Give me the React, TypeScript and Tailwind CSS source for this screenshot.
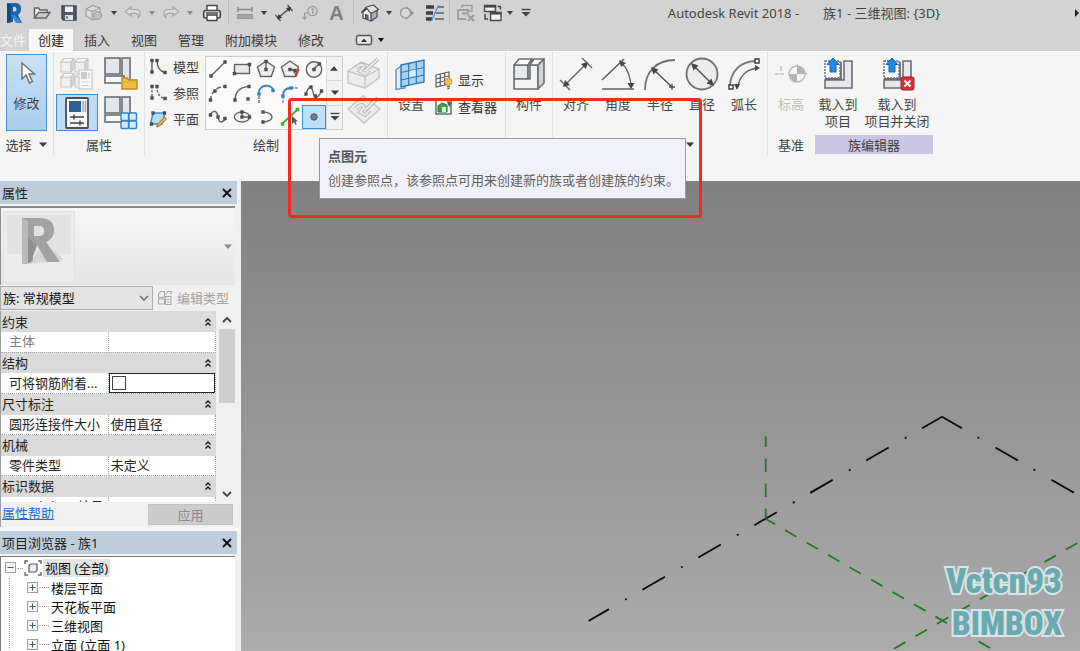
import { useState } from "react";
import type { ReactNode } from "react";

function Svg({ w, h, children }: { w: number; h: number; children: ReactNode }) {
  return (
    <svg width={w} height={h} viewBox={`0 0 ${w} ${h}`} fill="none" stroke="#5f6266" strokeWidth="1.4" className="shrink-0" aria-hidden="true">
      {children}
    </svg>
  );
}

function Node({ x, y, c = "#4b4e52" }: { x: number; y: number; c?: string }) {
  return <rect x={x - 1.7} y={y - 1.7} width="3.4" height="3.4" rx="0.4" fill={c} stroke="none" />;
}

function Caret({ c = "#3c3c3c" }: { c?: string }) {
  return (
    <Svg w={8} h={6}>
      <path d="M1 1h6L4 5z" fill={c} stroke="none" />
    </Svg>
  );
}

function WideCaret({ c = "#3c3c3c" }: { c?: string }) {
  return (
    <Svg w={10} h={6}>
      <path d="M1 0.500h8L5 5z" fill={c} stroke="none" />
    </Svg>
  );
}

/* ---------- quick access bar ---------- */

const LogoR = () => (
  <Svg w={20} h={22}>
    <path d="M3 1h8c4 0 6 2 6 6 0 3-1 4-3 6l4 8h-6l-3-7v6l-6 1z" fill="#1c62ad" stroke="none" />
    <path d="M3 1l4 2v17l-4 1z" fill="#134a86" stroke="none" />
    <path d="M7 13l4 0 7 8h-6z" fill="#3b87cf" stroke="none" />
    <path d="M9 5h1.500c1.500 0 2 .8 2 2.200s-.8 2.300-2 2.300H9z" fill="#d3d3d3" stroke="none" />
  </Svg>
);

const OpenIcon = () => (
  <Svg w={18} h={16}>
    <path d="M1.500 13V3h4l1.500 2h7v2.500" fill="#f2f2f2" />
    <path d="M1.500 13l4-5.500h11.500L13 13z" fill="#c9cdd1" />
  </Svg>
);

const SaveIcon = () => (
  <Svg w={18} h={18}>
    <path d="M2 2h14v14H3.500L2 14.500z" fill="#4b5968" stroke="#3f4750" />
    <rect x="5" y="2.500" width="8" height="5.500" fill="#eef1f4" stroke="none" />
    <rect x="5" y="11" width="8" height="5" fill="#dfe4e8" stroke="none" />
    <path d="M7 12v3" />
  </Svg>
);

const CubesIcon = () => (
  <Svg w={20} h={18}>
    <g stroke="#9f9f9f" strokeWidth="1.200">
      <path d="M2 5l7-3.500 7 2.500v7l-7 5-7-4z" fill="#dedede" />
      <path d="M2 5l6 2.500v8.500M8 7.500l8-3.500" />
      <circle cx="13.500" cy="11.500" r="4" fill="#bdbdbd" />
    </g>
  </Svg>
);

const UndoIcon = () => (
  <Svg w={18} h={16}>
    <path d="M7 2L1.500 6.500 7 11V8.300h4.500c2 0 3 1 2.500 4.200 3.500-3 2.500-8-2.500-8H7z" fill="#dcdcdc" stroke="#a5a5a5" strokeWidth="1.200" />
  </Svg>
);

const RedoIcon = () => (
  <Svg w={18} h={16}>
    <path d="M11 2l5.500 4.500L11 11V8.300H6.500c-2 0-3 1-2.500 4.200-3.500-3-2.500-8 2.500-8H11z" fill="#dcdcdc" stroke="#a5a5a5" strokeWidth="1.200" />
  </Svg>
);

const PrintIcon = () => (
  <Svg w={20} h={18}>
    <path d="M5 7V1.500h10V7" fill="#fff" stroke="#444" />
    <rect x="1.700" y="6.500" width="16.600" height="7.500" rx="2" fill="#e4e6e8" stroke="#444" strokeWidth="1.600" />
    <path d="M5 11h10v5.500H5z" fill="#fff" stroke="#444" />
    <path d="M4 9h12" stroke="#444" />
  </Svg>
);

const MeasureIcon = () => (
  <Svg w={18} h={14}>
    <path d="M2 3.500h14M2 1v5M16 1v5" stroke="#8a8a8a" />
    <rect x="1.500" y="8.500" width="15" height="4" fill="#a5a5a5" stroke="#959595" strokeWidth="1" />
  </Svg>
);

const DimensionIcon = () => (
  <Svg w={20} h={18}>
    <path d="M4 14L16 4M1.500 11l5 6M13.500 1l5 6" stroke="#444" strokeWidth="1.200" />
    <path d="M3 15l1.500-5 3.500 4zM17 3l-1.500 5L12 4z" fill="#333" stroke="none" />
  </Svg>
);

const TagIcon = () => (
  <Svg w={18} h={16}>
    <circle cx="11.500" cy="6" r="4.700" stroke="#999" strokeWidth="1.200" />
    <path d="M10.500 4.500l1.300-.9V9M7 8H3.500v6M1.500 11.500l2 3 2-3" stroke="#999" strokeWidth="1.200" />
  </Svg>
);

const HouseIcon = () => (
  <Svg w={20} h={18}>
    <g stroke="#484c50" strokeWidth="1.200" strokeLinejoin="round">
      <path d="M11 9l6-3v7l-6 4z" fill="#a9b4be" />
      <path d="M3 8l4-3.500L11 9v8l-8-3z" fill="#eef0f2" />
      <path d="M1.500 8.500L6.500 3l7-2 5 4.500-7.500 4L7 4.500z" fill="#dfe3e7" />
      <path d="M5.500 14.500v-4l2.500 1v4z" fill="#7d848b" />
    </g>
  </Svg>
);

const SectionIcon = () => (
  <Svg w={16} h={14}>
    <path d="M7 0l8 7-8 7z" fill="#8f8f8f" stroke="none" />
    <circle cx="6.500" cy="7" r="5" fill="#d8d8d8" stroke="#9a9a9a" />
  </Svg>
);

const ThinLinesIcon = () => (
  <Svg w={20} h={18}>
    <path d="M1 3h8M1 9h7M1 15h6" stroke="#3b3f44" strokeWidth="3.400" />
    <path d="M12 3h7M11 9h8M10 15h9" stroke="#5a5e63" strokeWidth="1.300" />
    <path d="M13.500 1L6.500 17" stroke="#4c9be0" strokeWidth="1.400" />
  </Svg>
);

const CloseHiddenIcon = () => (
  <Svg w={20} h={18}>
    <g stroke="#9c9c9c">
      <path d="M6 4V1.500h10V7h-3" />
      <path d="M2 6h10v4M2 5.500V15h8M6 9.500h6" strokeWidth="1.800" />
      <path d="M12 11l6 6M18 11l-6 6" strokeWidth="2" />
    </g>
  </Svg>
);

const SwitchIcon = () => (
  <Svg w={20} h={18}>
    <g stroke="#45484b">
      <path d="M1.500 1.500h11v6h-11z" fill="#eee" />
      <path d="M1.500 2.500h11" strokeWidth="2.200" />
      <path d="M7.500 8.500h10.500v8H7.500z" fill="#f2f2f2" />
      <path d="M7.500 9.500H18" strokeWidth="2.200" />
      <path d="M14.500 2.500h3v3M2 10v5h3" />
    </g>
  </Svg>
);

const CustomizeIcon = () => (
  <Svg w={12} h={10}>
    <path d="M1.500 1.500h9" stroke="#444" />
    <path d="M1.500 4h9L6 8.500z" fill="#444" stroke="none" />
  </Svg>
);

const quickTools: { name: string; box: string; icon: ReactNode }[] = [
  { name: "Revit", box: "w-[27px]", icon: <LogoR /> },
  { name: "打开", box: "w-[30px]", icon: <OpenIcon /> },
  { name: "保存", box: "w-[23px]", icon: <SaveIcon /> },
  { name: "同步", box: "w-7", icon: <CubesIcon /> },
  { name: "同步选项", box: "w-3", icon: <Caret /> },
  { name: "放弃", box: "w-[26px]", icon: <UndoIcon /> },
  { name: "放弃列表", box: "w-3", icon: <Caret c="#8a8a8a" /> },
  { name: "重做", box: "w-[26px]", icon: <RedoIcon /> },
  { name: "重做列表", box: "w-3", icon: <Caret c="#8a8a8a" /> },
  { name: "打印", box: "w-8", icon: <PrintIcon /> },
  { name: "", box: "w-px", icon: null },
  { name: "测量", box: "w-[31px]", icon: <MeasureIcon /> },
  { name: "测量选项", box: "w-2", icon: <Caret /> },
  { name: "对齐尺寸标注", box: "w-8", icon: <DimensionIcon /> },
  { name: "按类别标记", box: "w-5", icon: <TagIcon /> },
  { name: "文字", box: "w-[33px]", icon: <span className="font-['Liberation_Sans'] text-xl font-bold text-[#7e7e7e]">A</span> },
  { name: "", box: "w-px", icon: null },
  { name: "默认三维视图", box: "w-[31px]", icon: <HouseIcon /> },
  { name: "三维视图选项", box: "w-2", icon: <Caret /> },
  { name: "剖面", box: "w-7", icon: <SectionIcon /> },
  { name: "细线", box: "w-7", icon: <ThinLinesIcon /> },
  { name: "", box: "w-px", icon: null },
  { name: "关闭隐藏窗口", box: "w-8", icon: <CloseHiddenIcon /> },
  { name: "切换窗口", box: "w-[22px]", icon: <SwitchIcon /> },
  { name: "窗口列表", box: "w-3", icon: <Caret /> },
  { name: "自定义快速访问工具栏", box: "w-5", icon: <CustomizeIcon /> },
];

function QuickAccessBar() {
  return (
    <header className="flex h-[26px] items-center">
      {quickTools.map((t, i) =>
        t.icon ? (
          <button key={i} aria-label={t.name} className={`flex h-6 shrink-0 items-center justify-center ${t.box}`}>
            {t.icon}
          </button>
        ) : (
          <span key={i} className="h-6 w-px shrink-0 bg-[#bdbdbd]" />
        )
      )}
      <h1 className="flex flex-1 justify-center gap-6 whitespace-nowrap text-[13px] text-[#444]">
        <span>Autodesk Revit 2018 -</span>
        <span>族1 - 三维视图: {"{3D}"}</span>
      </h1>
      <button aria-label="更多" className="w-2">
        <Svg w={8} h={10}>
          <path d="M3 1l4 4-4 4z" fill="#222" stroke="none" />
        </Svg>
      </button>
    </header>
  );
}

/* ---------- tabs ---------- */

const tabs = ["插入", "视图", "管理", "附加模块", "修改"];

function TabRow() {
  return (
    <nav className="flex h-[25px] items-end gap-px">
      <button className="h-[22px] w-7 overflow-hidden whitespace-nowrap text-left text-[#f3f3f3]">文件</button>
      <button className="h-[22px] w-11 bg-[#f7f7f7] text-[#222]">创建</button>
      {tabs.map((t) => (
        <button key={t} className="h-[22px] px-2.5 text-[#3a3a3a]">{t}</button>
      ))}
      <button aria-label="最小化面板" className="ml-5 flex h-[22px] items-center gap-1">
        <Svg w={18} h={12}>
          <rect x="1.500" y="1.500" width="15" height="9" rx="2" fill="#e6e6e6" stroke="#555" />
          <path d="M6 8h6L9 4.500z" fill="#333" stroke="none" />
        </Svg>
        <Caret c="#111" />
      </button>
    </nav>
  );
}

/* ---------- ribbon icons ---------- */

const PropPalette = () => (
  <Svg w={32} h={34}>
    <rect x="5" y="2" width="22" height="30" rx="1" fill="#f4f5f6" stroke="#4b4f54" strokeWidth="1.800" />
    <rect x="8" y="5" width="12" height="11" fill="#2d6093" stroke="none" />
    <path d="M22 5v11M24.500 5v11" stroke="#9aa7b3" />
    <path d="M9 21h14M9 27h14M13 18.500v5M19 24.500v5" stroke="#3c3f43" />
  </Svg>
);

const GhostCube = ({ x, y }: { x: number; y: number }) => (
  <g transform={`translate(${x} ${y})`} strokeLinejoin="round">
    <path d="M0 4h10v10H0z" fill="#efefef" />
    <path d="M0 4l3-3.500h10L10 4z" fill="#f8f8f8" />
    <path d="M10 4l3-3.500v10L10 14z" fill="#d6d6d6" />
  </g>
);

const TypeProps = () => (
  <Svg w={34} h={34}>
    <g stroke="#c9c9c9" strokeWidth="1.200">
      <GhostCube x={15} y={1} />
      <GhostCube x={1} y={1} />
      <GhostCube x={15} y={16} />
      <GhostCube x={1} y={16} />
      <rect x="19" y="13" width="13" height="19" fill="#fafafa" />
      <rect x="21.500" y="15.500" width="5" height="6" fill="#c9c9c9" />
      <path d="M29 15.500v6M22 25h7M22 28.500h7" />
    </g>
  </Svg>
);

const FrameShape = () => (
  <g stroke="#6a6e74" strokeWidth="1.600" fill="#e3e6ea">
    <rect x="2" y="2" width="15" height="16" />
    <rect x="19" y="2" width="8" height="24" />
    <rect x="2" y="20" width="19" height="7" fill="#f8f8f8" />
  </g>
);

const FamilyCategory = () => (
  <Svg w={36} h={36}>
    <FrameShape />
    <path d="M19 22h5l2 2h8v9H19z" fill="#f5bd3f" stroke="#c08a1c" />
    <path d="M19 26h15" stroke="#dba42d" strokeWidth="1" />
  </Svg>
);

const FamilyTypes = () => (
  <Svg w={36} h={36}>
    <FrameShape />
    <g fill="#d5ebfb" stroke="#2f83c9">
      <rect x="18" y="18" width="7.500" height="7.500" rx="1" />
      <rect x="26" y="18" width="7.500" height="7.500" rx="1" />
      <rect x="18" y="26" width="7.500" height="7.500" rx="1" />
      <rect x="26" y="26" width="7.500" height="7.500" rx="1" />
    </g>
  </Svg>
);

const ModelLine = ({ dash = false }: { dash?: boolean }) => (
  <Svg w={18} h={18}>
    <path d="M3 2v12M8 2c0 7 2 11 8 12.500" strokeDasharray={dash ? "2.500 1.500" : undefined} />
    <Node x={3} y={2.500} />
    <Node x={3} y={14} />
    <Node x={8} y={2.500} />
    <Node x={16} y={14.500} />
  </Svg>
);

const RefPlane = () => (
  <Svg w={18} h={18}>
    <path d="M4 3h12l-3 11H1.500z" fill="#b9dcf5" stroke="#3d87c4" />
    <Node x={4} y={3} />
    <Node x={15.500} y={3} />
    <Node x={2.500} y={14} />
    <path d="M15.500 7l2 2-7 7-3 1 1-3z" fill="#f3ad4a" stroke="#9a6a26" strokeWidth="1" />
  </Svg>
);

const blue = "#2f7fc4";
const green = "#35b535";

const drawTools: { name: string; icon: ReactNode }[] = [
  { name: "直线", icon: <><path d="M5 19L19 5" /><Node x={5} y={19} /><Node x={19} y={5} /></> },
  { name: "矩形", icon: <><rect x="4.500" y="7.500" width="15" height="9" fill="#e6e8ea" /><Node x={4.500} y={16.500} /><Node x={19.500} y={7.500} /></> },
  { name: "内接多边形", icon: <><path d="M12 4l8.500 6-3.200 9.500H6.700L3.500 10z" fill="#eef0f1" /><path d="M12 4v8" /><Node x={12} y={4.500} /><Node x={12} y={12.500} /></> },
  { name: "外接多边形", icon: <><path d="M12 4l8.500 6-3.200 9.500H6.700L3.500 10z" fill="#eef0f1" /><path d="M12 12l5.500 2" /><path d="M16 15l2.500 3.500L21 12" stroke="#d8343d" /><Node x={12} y={12.500} /><Node x={17} y={13.500} /></> },
  { name: "圆形", icon: <><circle cx="12" cy="12.500" r="7.700" fill="#eef0f1" /><path d="M12 12l5-5" /><Node x={12} y={12.500} /><Node x={17.500} y={7} /></> },
  { name: "起点终点半径弧", icon: <><path d="M4.500 20C5 12 9 6 19 5.500" strokeDasharray="5 2" /><Node x={4.500} y={19} /><Node x={9} y={10} /><Node x={19} y={5.500} /></> },
  { name: "圆心端点弧", icon: <><path d="M5 20C5 12 9 6 19 5.500" /><Node x={5} y={19} /><Node x={19} y={5.500} /><Node x={18} y={18} /></> },
  { name: "相切端点弧", icon: <><path d="M4.500 13C4.500 3 18 2 19.500 10" stroke={blue} strokeWidth="1.800" /><path d="M5 15v7" strokeDasharray="3 1" /><Node x={5} y={13} c={blue} /><Node x={19} y={9.500} c={blue} /></> },
  { name: "圆角弧", icon: <><path d="M5 15C5 9 8 7 13 7" stroke={blue} strokeWidth="1.800" /><path d="M13 7h8M5 15v7" stroke="#7f8a94" strokeDasharray="3 1" /><Node x={5} y={15} c={blue} /><Node x={13} y={7} c={blue} /></> },
  { name: "样条曲线", icon: <><path d="M4 13c2-8 6-8 7-2s4 8 8 0" /><Node x={4} y={13} /><Node x={9} y={6} /><Node x={13.500} y={15} /><Node x={19.500} y={10} /></> },
  { name: "通过点的样条", icon: <><path d="M4 10c4-6 7-4 8 2s4 7 8 1" /><Node x={4.500} y={10} /><Node x={12} y={12} /><Node x={19} y={13.500} /></> },
  { name: "椭圆", icon: <><ellipse cx="12" cy="12" rx="7.700" ry="5" fill="#eef0f1" /><path d="M12 12h7M12 7v5" /><Node x={12} y={12} /><Node x={19.500} y={12} /><Node x={12} y={7} /></> },
  { name: "半椭圆", icon: <><path d="M9 7c12 0 12 10 0 10" /><Node x={9} y={7} /><Node x={9} y={17} /></> },
  { name: "拾取线", icon: <><path d="M4 19L20 4" stroke={green} strokeWidth="2" /><Node x={4.500} y={19} c={green} /><Node x={19.500} y={4.500} c={green} /><path d="M14 11v8l2-2 1.500 3 1.300-.7-1.500-2.800H20z" fill="#555" stroke="none" /></> },
  { name: "点图元", icon: <circle cx="12" cy="12" r="3.200" fill="#6f7f8c" stroke="#4a5964" strokeWidth="1" /> },
];

const DrawOnFace = () => (
  <Svg w={34} h={34}>
    <g stroke="#c6c6c6" strokeLinejoin="round">
      <path d="M1 15L14 6l18 7v9L18 32 1 27z" fill="#ececec" />
      <path d="M1 15l17 6 14-8M18 21v11" />
    </g>
    <path d="M31 3L18 15M9 12c3-4 8-4 8-1l-4 4 5 3 4-4" stroke="#bfbfbf" strokeWidth="4" />
    <path d="M31 3L18 15M9 12c3-4 8-4 8-1l-4 4 5 3 4-4" stroke="#f1f1f1" strokeWidth="1.600" />
  </Svg>
);

const DrawOnPlane = () => (
  <Svg w={34} h={32}>
    <path d="M1 15L16 2l17 13-16 14z" fill="#ececec" stroke="#c6c6c6" />
    <path d="M31 4L18 16M9 15c3-5 8-5 8-1l-4 4 5 3 5-5" stroke="#bfbfbf" strokeWidth="4" />
    <path d="M31 4L18 16M9 15c3-5 8-5 8-1l-4 4 5 3 5-5" stroke="#f1f1f1" strokeWidth="1.600" />
  </Svg>
);

const WorkPlane = () => (
  <Svg w={34} h={34}>
    <path d="M2 13l5-4h4v22l-9 1.500z" fill="#dcebf6" stroke="#6390b5" />
    <path d="M7 8l23-5v22L7 30z" fill="#a9d3f1" stroke="#2f79b5" />
    <path d="M14.700 6v22M22.300 4.500v22M7 15.500l23-5M7 23l23-5" stroke="#2f79b5" strokeWidth="1.200" />
    <path d="M15.400 14l6.200-1.400v6l-6.200 1.400z" fill="#d9edfb" stroke="none" />
  </Svg>
);

const ShowPlane = () => (
  <Svg w={20} h={20}>
    <path d="M2 5l13-3v12L2 17zM6.300 4v12M10.700 3v12M2 9l13-3M2 13l13-3" strokeWidth="1.200" />
    <circle cx="14.500" cy="11.500" r="3.500" fill="#fbc04e" stroke="#e69a2a" strokeWidth="1" />
    <path d="M13 16.500h3M13.500 18.500h2" stroke="#666" />
  </Svg>
);

const ViewerIcon = () => (
  <Svg w={20} h={20}>
    <rect x="2" y="3" width="15" height="14" fill="#f3f3f3" />
    <path d="M4 15V9l4-3 5 2v7z" fill="#3f9d46" stroke="#2c7a33" strokeWidth="1" />
    <path d="M8 10h4v5H8z" fill="#d9efd9" stroke="none" />
    <path d="M13 4l5 1-2 5-2-2z" fill="#5b5f63" stroke="none" />
  </Svg>
);

const ComponentIcon = () => (
  <Svg w={34} h={34}>
    <g stroke="#6b6f74" strokeWidth="1.600" strokeLinejoin="round">
      <path d="M2 8h14v14H2z" fill="#e6e9ec" />
      <path d="M2 8l5-6h13l-4 6z" fill="#fcfcfc" />
      <path d="M16 8l4-6v18l-4 2z" fill="#cdd2d7" />
      <path d="M18 8h8v24H2V22h16z" fill="#f0f2f4" />
      <path d="M18 8l4-6h10l-6 6z" fill="#fcfcfc" />
      <path d="M26 8l6-6v24l-6 6z" fill="#cdd2d7" />
    </g>
  </Svg>
);

const AlignedDim = () => (
  <Svg w={34} h={34}>
    <path d="M6 28L27 7M1 23l10 10M23 1l10 10" />
    <path d="M4 30l2-7 5 5zM29 5l-2 7-5-5z" fill="#44484c" stroke="none" />
  </Svg>
);

const AngularDim = () => (
  <Svg w={34} h={34}>
    <path d="M1 32h32M1 23L23 2" strokeWidth="1.600" />
    <path d="M20 5c7 7 10 15 10 26" />
    <path d="M18 3l7 3-5 4zM30 32l-3.500-6h7z" fill="#44484c" stroke="none" />
  </Svg>
);

const RadialDim = () => (
  <Svg w={34} h={34}>
    <path d="M2 33C2 14 14 3 32 3" stroke="#6e7276" strokeWidth="1.800" />
    <path d="M10 12l19 18M29 27v6M26 30h6" stroke="#4c5054" />
    <path d="M8 10l7.500 2.500-5 5z" fill="#44484c" stroke="none" />
  </Svg>
);

const DiameterDim = () => (
  <Svg w={34} h={34}>
    <circle cx="17" cy="17" r="15.500" fill="#ededee" stroke="#6e7276" strokeWidth="1.800" />
    <path d="M8 8l18 18" stroke="#4c5054" />
    <path d="M6 6l7.500 2.500-5 5zM29 29l-7.500-2.500 5-5z" fill="#44484c" stroke="none" />
  </Svg>
);

const ArcDim = () => (
  <Svg w={34} h={34}>
    <path d="M3 28C4 14 14 4 29 4" stroke="#777b7f" strokeWidth="1.800" />
    <path d="M11 30c1-10 8-18 20-19" />
    <rect x="28" y="2" width="4" height="4" fill="#fff" stroke="#333" />
    <rect x="2" y="28" width="4" height="4" fill="#fff" stroke="#333" />
    <path d="M10 33l-3-6h6zM33 11l-5-3v6z" fill="#44484c" stroke="none" />
  </Svg>
);

const LevelIcon = () => (
  <Svg w={34} h={34}>
    <path d="M1 17h10M24 17h9M23 7v20" stroke="#c0c0c0" strokeDasharray="4 1" />
    <path d="M7 9v5" stroke="#bdbdbd" />
    <circle cx="23" cy="17" r="8" fill="#f5f5f5" stroke="#b8b8b8" />
    <path d="M23 17V9a8 8 0 0 1 8 8zM23 17v8a8 8 0 0 1-8-8z" fill="#b4b4b4" stroke="none" />
  </Svg>
);

const LoadIcon = ({ close = false }: { close?: boolean }) => (
  <Svg w={36} h={36}>
    <path d="M5 5h15v17H5z" fill="#fbfbfb" stroke="#6a6e73" strokeDasharray="2 1" />
    <path d="M24 5h8v27H5v-8h19z" fill="#e6e9ec" stroke="#6a6e73" strokeWidth="1.600" />
    <path d="M5 23h16V6" stroke="#6a6e73" strokeWidth="1.800" />
    <path d="M13 2l6 6.500h-3V16h-6V8.500H7z" fill="#2389e8" stroke="#1767b8" strokeWidth="1" />
    {close && (
      <>
        <rect x="22" y="21" width="13" height="13" rx="2" fill="#d2333a" stroke="#a11d24" strokeWidth="1" />
        <path d="M25.500 24.500l6 6M31.500 24.500l-6 6" stroke="#fff" strokeWidth="2" />
      </>
    )}
  </Svg>
);

const CursorIcon = () => (
  <Svg w={20} h={24}>
    <path d="M5 2v16l4-4 3.500 8 3-1.500-3.500-7.500h5.500z" fill="#fbfbfb" stroke="#66717c" strokeWidth="1.400" />
  </Svg>
);

/* ---------- ribbon ---------- */

function Panel({ label, className = "", children }: { label: ReactNode; className?: string; children: ReactNode }) {
  return (
    <section className="flex h-[103px] shrink-0 flex-col border-r border-[#e0e0e0]">
      <div className={`flex h-[83px] items-start ${className}`}>{children}</div>
      <div className="flex h-[19px] items-center justify-center gap-1.5">{label}</div>
    </section>
  );
}

function BigTool({ name, icon, width = "w-[42px]", tone = "text-[#444]" }: { name: string; icon: ReactNode; width?: string; tone?: string }) {
  return (
    <button className={`flex flex-col items-center whitespace-pre-line leading-[17px] ${width} ${tone}`}>
      <span className="mb-1 flex h-9 items-center">{icon}</span>
      {name}
    </button>
  );
}

const dims = [
  { name: "对齐", icon: <AlignedDim /> },
  { name: "角度", icon: <AngularDim /> },
  { name: "半径", icon: <RadialDim /> },
  { name: "直径", icon: <DiameterDim /> },
  { name: "弧长", icon: <ArcDim /> },
];

function Ribbon() {
  const [tool, setTool] = useState("点图元");

  return (
    <div className="flex h-[130px] shrink-0 overflow-hidden border-t border-white bg-[#f5f5f5] text-[#3f3f3f]">
      <Panel label={<>选择 <WideCaret /></>} className="px-1.5 pt-0.5">
        <button className="flex h-[77px] w-[41px] flex-col items-center border border-[#4a90d0] bg-linear-to-b from-[#cbe0f4] to-[#a9cdee] pt-1.5">
          <CursorIcon />
          <span className="mt-2">修改</span>
        </button>
      </Panel>

      <Panel label="属性" className="px-0.5 pt-0.5">
        <div className="grid grid-cols-[42px_42px] gap-x-0.5">
          <button aria-label="类型属性" className="flex h-10 items-center justify-center"><TypeProps /></button>
          <button aria-label="族类别和族参数" className="flex h-10 items-center justify-center"><FamilyCategory /></button>
          <button aria-label="属性" className="flex h-[37px] items-center justify-center border border-[#3f8bd0] bg-[#bfdcf5]"><PropPalette /></button>
          <button aria-label="族类型" className="flex h-[37px] items-center justify-center"><FamilyTypes /></button>
        </div>
      </Panel>

      <Panel label="绘制" className="gap-1 pl-1 pr-1.5 pt-1">
        <div className="-mt-0.5 flex flex-col">
          <button className="flex h-[26px] items-center gap-1.5"><ModelLine />模型</button>
          <button className="flex h-[26px] items-center gap-1.5"><ModelLine dash />参照</button>
          <button className="flex h-[26px] items-center gap-1.5"><RefPlane />平面</button>
        </div>
        <div className="ml-0.5 flex border border-[#cfcfcf] bg-[#fafafa]">
          <div className="grid grid-cols-[24px_24px_24px_24px_24px]">
            {drawTools.map((d) => (
              <button
                key={d.name}
                aria-label={d.name}
                onClick={() => setTool(d.name)}
                className={`flex h-6 items-center justify-center ${tool === d.name ? "border border-[#3f8bd0] bg-[#bfe0f8]" : ""}`}
              >
                <Svg w={24} h={24}>{d.icon}</Svg>
              </button>
            ))}
          </div>
          <div className="flex w-4 flex-col border-l border-[#d8d8d8] bg-[#f2f2f2]">
            <button aria-label="上一行" className="flex flex-1 rotate-180 items-center justify-center"><WideCaret /></button>
            <button aria-label="下一行" className="flex flex-1 items-center justify-center border-y border-[#d8d8d8]"><WideCaret /></button>
            <button aria-label="更多工具" className="flex flex-1 items-center justify-center"><CustomizeIcon /></button>
          </div>
        </div>
        <div className="flex flex-col gap-1">
          <button aria-label="在面上绘制"><DrawOnFace /></button>
          <button aria-label="在工作平面上绘制"><DrawOnPlane /></button>
        </div>
      </Panel>

      <Panel label="" className="pl-0.5 pr-2 pt-1">
        <BigTool name="设置" icon={<WorkPlane />} />
        <div className="flex flex-col pt-2.5 text-[#333]">
          <button className="ml-0.5 flex h-[27px] items-center gap-1"><ShowPlane />显示</button>
          <button className="ml-0.5 flex h-[27px] items-center gap-1"><ViewerIcon />查看器</button>
        </div>
      </Panel>

      <Panel label="" className="px-0.5 pt-1">
        <BigTool name="构件" icon={<ComponentIcon />} />
      </Panel>

      <Panel label={<span className="pl-[60px]"><WideCaret /></span>} className="px-0.5 pt-1">
        {dims.map((d) => <BigTool key={d.name} name={d.name} icon={d.icon} />)}
      </Panel>

      <section className="flex h-[103px] shrink-0 flex-col">
        <div className="flex h-[83px] items-start px-0.5 pt-1">
          <BigTool name="标高" icon={<LevelIcon />} tone="text-[#bdbdbd]" />
        </div>
        <div className="flex h-[19px] items-center justify-center">基准</div>
      </section>

      <section className="flex h-[103px] shrink-0 flex-col pl-px">
        <div className="flex h-[83px] items-start pt-1">
          <BigTool name={"载入到\n项目"} icon={<LoadIcon />} width="w-[46px]" />
          <BigTool name={"载入到\n项目并关闭"} icon={<LoadIcon close />} width="w-[72px]" />
        </div>
        <div className="flex h-[19px] items-center justify-center bg-[#c9c7e3]">族编辑器</div>
      </section>
    </div>
  );
}

/* ---------- properties palette ---------- */

const groups = [
  { title: "约束", label: "主体", value: "", dim: true },
  { title: "结构", label: "可将钢筋附着...", value: "check", dim: false },
  { title: "尺寸标注", label: "圆形连接件大小", value: "使用直径", dim: false },
  { title: "机械", label: "零件类型", value: "未定义", dim: false },
  { title: "标识数据", label: "OmniClass 编号", value: "", dim: false },
];

function PaletteHeader({ title }: { title: string }) {
  return (
    <div className="mr-1 flex h-[23px] shrink-0 items-center justify-between bg-[#bfcddb] pl-0.5 pr-1">
      <h2>{title}</h2>
      <button aria-label="关闭">
        <Svg w={12} h={12}>
          <path d="M2 2l8 8M10 2l-8 8" stroke="#111" strokeWidth="2" />
        </Svg>
      </button>
    </div>
  );
}

const FamilyThumb = () => (
  <Svg w={70} h={70}>
    <rect x="3" y="3" width="64" height="39" fill="#e2e2e2" stroke="none" />
    <path d="M24 52l36-4-18-18z" fill="#d6d6d6" stroke="none" />
    <path fillRule="evenodd" d="M18 6h17c10 0 15 4 15 12 0 6-3 10-8 12l14 20H43L33 33h-4v16l-7 3-4-1zM30 14v10h5c4 0 5-2 5-5s-1-5-5-5z" fill="#a2a2a2" stroke="none" />
    <path d="M18 6l6 3v42l-6 1z" fill="#b9b9b9" stroke="none" />
    <path d="M24 26l9 7-6 17-3 1z" fill="#8f8f8f" stroke="none" />
  </Svg>
);

function PropertiesPalette() {
  return (
    <section className="flex shrink-0 flex-col">
      <PaletteHeader title="属性" />
      <div className="mr-1.5 mt-0.5 flex h-[79px] items-center border-l border-t-2 border-[#8b8b8b] bg-linear-to-b from-[#f6f6f6] to-[#e6e6e6] pl-0.5 pr-0.5">
        <div className="border border-[#e0e0e0] bg-[#ececec]"><FamilyThumb /></div>
        <button aria-label="类型选择器" className="ml-auto"><WideCaret c="#8f8f8f" /></button>
      </div>
      <div className="mr-1.5 flex h-[26px] items-center">
        <div className="relative w-[153px]">
          <select aria-label="族" className="block h-6 w-full appearance-none border border-[#acacac] bg-[#e3e3e3] pl-0.5 text-[#111]">
            <option>族: 常规模型</option>
          </select>
          <span className="pointer-events-none absolute right-1 top-2">
            <Svg w={10} h={8}><path d="M1 2l4 4 4-4" /></Svg>
          </span>
        </div>
        <button className="flex items-center gap-1 pl-1 text-[#a3a3a3]" disabled>
          <Svg w={16} h={16}>
            <path d="M1.500 4.500l2-3h4v5l-1 1h-5zM8.500 4.500l2-3h3.500v3M1.500 9h6v5h-6zM8.500 6.500h5.500v8H8.500zM10 9.500h2.500M10 12h2.500" stroke="#a9a9a9" strokeWidth="1.100" />
          </Svg>
          编辑类型
        </button>
      </div>
      <div className="mr-1.5 flex h-[191px] border-l border-[#a0a0a0]">
        <div className="flex-1 overflow-hidden bg-white">
          <table className="w-full table-fixed border-collapse">
            {groups.map((g) => (
              <tbody key={g.title}>
                <tr className="h-[21px] bg-[#dadada]">
                  <th colSpan={2} className="p-0 pl-px text-left font-normal leading-5">
                    <div className="flex items-center justify-between pr-1">
                      {g.title}
                      <button aria-label={`折叠${g.title}`}>
                        <Svg w={8} h={10}><path d="M1.500 4.500L4 2l2.500 2.500M1.500 8.500L4 6l2.500 2.500" stroke="#111" strokeWidth="1.300" /></Svg>
                      </button>
                    </div>
                  </th>
                </tr>
                <tr className="h-5">
                  <td className={`w-1/2 whitespace-nowrap border-b border-r border-dotted border-[#a8a8a8] p-0 pl-2 leading-[19px] ${g.dim ? "text-[#808080]" : ""}`}>{g.label}</td>
                  <td className="border-b border-r border-dotted border-[#a8a8a8] p-0 leading-[19px]">
                    {g.value === "check" ? (
                      <label className="flex h-5 items-center border border-[#222] pl-0.5">
                        <input type="checkbox" aria-label={g.label} className="size-3.5 appearance-none border border-[#444] bg-white checked:bg-[#444]" />
                      </label>
                    ) : (
                      <span className="pl-0.5">{g.value}</span>
                    )}
                  </td>
                </tr>
              </tbody>
            ))}
          </table>
        </div>
        <div className="ml-0.5 flex w-[17px] flex-col items-center justify-between bg-[#f0f0f0] pb-1">
          <button aria-label="向上滚动" className="flex h-[18px] w-full items-center justify-center">
            <Svg w={10} h={8}><path d="M1 6l4-4 4 4" stroke="#444" strokeWidth="1.800" /></Svg>
          </button>
          <div className="mb-auto h-[74px] w-4 bg-[#cdcdcd]" />
          <button aria-label="向下滚动">
            <Svg w={10} h={8}><path d="M1 2l4 4 4-4" stroke="#444" strokeWidth="1.800" /></Svg>
          </button>
        </div>
      </div>
      <div className="mr-1.5 flex h-[25px] items-center justify-between border-l border-[#a0a0a0] pl-px pr-0.5">
        <a href="#help" className="-mt-1 text-[#1a6fd0] underline">属性帮助</a>
        <button disabled className="h-[21px] w-[85px] border border-[#c2c2c2] bg-[#cccccc] text-[#8a8a8a]">应用</button>
      </div>
    </section>
  );
}

/* ---------- project browser ---------- */

function Toggle({ open }: { open: boolean }) {
  return (
    <Svg w={12} h={12}>
      <rect x="0.500" y="0.500" width="10" height="10" fill="#f6f6f6" stroke="#9aa0a8" strokeWidth="1" />
      <path d={open ? "M2.500 5.500h6" : "M2.500 5.500h6M5.500 2.500v6"} stroke="#3f5579" strokeWidth="1" />
    </Svg>
  );
}

const views = ["楼层平面", "天花板平面", "三维视图", "立面 (立面 1)"];

function ProjectBrowser() {
  const [open, setOpen] = useState(true);

  return (
    <section className="flex min-h-0 flex-1 flex-col border-t-4 border-[#f6f6f6]">
      <PaletteHeader title="项目浏览器 - 族1" />
      <div className="mr-1.5 mt-0.5 flex-1 overflow-hidden border-l border-t border-[#7d7d7d] bg-white pt-px">
        <ul className="text-[#111]">
          <li>
            <button onClick={() => setOpen(!open)} className="flex h-5 items-center pl-1">
              <Toggle open={open} />
              <span className="w-1.5 border-t border-dotted border-[#aaa]" />
              <Svg w={20} h={18}>
                <path d="M2 5V2h3M15 2h3v3M18 13v3h-3M5 16H2v-3" stroke="#666" />
                <path d="M6 6.500l1.500-1.500H14v6.500L12.500 13H6z" fill="#eceff3" stroke="#556" strokeWidth="1.200" />
              </Svg>
              <span className="bg-[#e4e4e4] px-0.5 leading-[18px]">视图 (全部)</span>
            </button>
            {open && (
              <ul className="ml-2 border-l border-dotted border-[#aaa]">
                {views.map((v) => (
                  <li key={v}>
                    <button className="flex h-[19px] items-center pl-[17px]">
                      <Toggle open={false} />
                      <span className="mr-0.5 w-2.5 border-t border-dotted border-[#aaa]" />
                      {v}
                    </button>
                  </li>
                ))}
              </ul>
            )}
          </li>
        </ul>
      </div>
    </section>
  );
}

/* ---------- drawing area ---------- */

function Canvas() {
  return (
    <main className="relative flex-1 overflow-hidden bg-linear-to-b from-[#808080] to-[#ababab]">
      <svg viewBox="0 0 839 470" preserveAspectRatio="xMinYMin slice" className="block size-full" fill="none">
        <g stroke="#0a0a0a" strokeWidth="1.800" strokeDasharray="26 18 2 18.600" strokeDashoffset="3">
          <path d="M701 235.700L347.500 440" />
          <path d="M701 235.700L833.500 312" />
        </g>
        <g stroke="#1f7a24" strokeWidth="1.800">
          <path d="M524.700 337.500V255.500" strokeDasharray="13.500 11.500" strokeDashoffset="3.500" />
          <path d="M524.700 338L756 471" strokeDasharray="13.200 11.600" strokeDashoffset="2.500" />
          <path d="M653 467.700L839 360.500" strokeDasharray="13.200 11.600" />
        </g>
      </svg>
      <div className="absolute bottom-1.5 right-[18px] flex flex-col items-end font-['Roboto_Condensed','Liberation_Sans',sans-serif] font-black leading-[42px] text-[#6aa9ae] [paint-order:stroke_fill] [-webkit-text-stroke:4px_#d8e4e5]">
        <span className="text-[35px]">Vctcn93</span>
        <span className="text-[33px]">BIMBOX</span>
      </div>
    </main>
  );
}

export default function App() {
  return (
    <div className="relative flex h-screen flex-col overflow-hidden bg-[#d3d3d3] font-['Noto_Sans','Noto_Sans_CJK_SC',sans-serif] text-[13px] leading-5 text-[#222]">
      <QuickAccessBar />
      <TabRow />
      <Ribbon />
      <div className="flex min-h-0 flex-1">
        <aside className="flex w-[241px] shrink-0 flex-col bg-[#f0f0f0]">
          <PropertiesPalette />
          <ProjectBrowser />
        </aside>
        <Canvas />
      </div>

      <div role="tooltip" className="absolute left-[319px] top-[138px] border border-[#9a9a9e] bg-[#f0f1f8] pb-1.5 pl-2 pr-1.5 pt-[5px]">
        <p className="font-bold leading-6 text-[#555]">点图元</p>
        <p className="whitespace-nowrap leading-6 text-[#606060]">创建参照点，该参照点可用来创建新的族或者创建族的约束。</p>
      </div>
      <div className="pointer-events-none absolute left-[288px] top-[98px] h-[120px] w-[414px] rounded-[4px] border-[3px] border-[#f42a20]" />
    </div>
  );
}
